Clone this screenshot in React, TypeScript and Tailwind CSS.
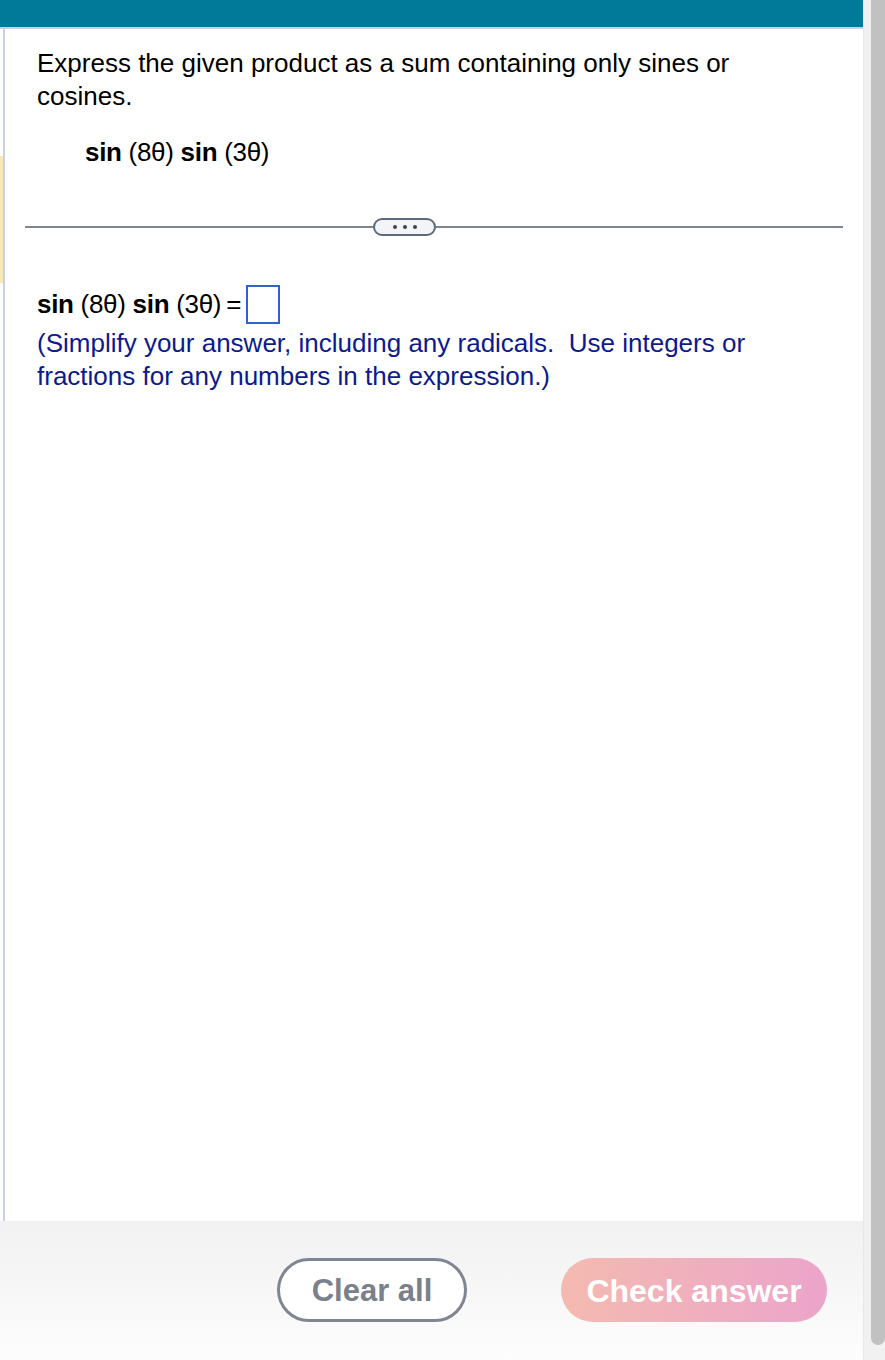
function Expr() {
  return (
    <span className="whitespace-nowrap tracking-[-0.3px]">
      <span className="font-bold">sin</span> (8θ) <span className="font-bold">sin</span> (3θ)
    </span>
  );
}

function App() {
  return (
    <main className="w-[885px] h-[1360px] flex bg-white font-['Liberation_Sans',Arial,sans-serif] text-black overflow-hidden">
      <div className="w-[863px] flex flex-col">
        <div className="h-[27px] bg-[#017a99] shrink-0" />
        <div className="h-[2px] bg-[#c9d1dd] shrink-0" />
        <div className="flex flex-1">
          {/* left edge strip */}
          <div className="w-[3px] flex flex-col">
            <div className="h-[127px]" />
            <div className="h-[127px] bg-[#f8e8b8]" />
          </div>
          <div className="w-[2px] bg-[#c9d0e0]" />
          <div className="flex-1 flex flex-col">
            <div className="pl-[32px] pr-[40px] pt-[18px] text-[26px] leading-[33px]">
              Express the given product as a sum containing only sines or cosines.
            </div>
            <div className="pl-[80px] mt-[23px] text-[26px] leading-[33px]">
              <Expr />
            </div>
            {/* divider */}
            <div className="flex items-center ml-[20px] mr-[20px] mt-[49px]">
              <div className="w-[348px] h-[2px] bg-[#7c8593]" />
              <div className="w-[63px] h-[18px] rounded-full border-2 border-[#5e6a79] bg-[#f3f4f6] flex items-center justify-center gap-[6px]">
                <span className="w-[4px] h-[4px] rounded-full bg-[#3d4550]" />
                <span className="w-[4px] h-[4px] rounded-full bg-[#3d4550]" />
                <span className="w-[4px] h-[4px] rounded-full bg-[#3d4550]" />
              </div>
              <div className="flex-1 h-[2px] bg-[#7c8593]" />
            </div>
            <div className="pl-[32px] mt-[49px] flex items-center text-[26px] leading-[33px]">
              <Expr />
              <span className="ml-[5px]">=</span>
              <span className="ml-[5px] w-[34px] h-[39px] border-2 border-[#2f63c9]" />
            </div>
            <div className="pl-[32px] pr-[80px] mt-[3px] text-[26px] leading-[33px] text-[#0c1a8c]">
              (Simplify your answer, including any radicals.&nbsp; Use integers or fractions for any numbers in the expression.)
            </div>
          </div>
        </div>
        {/* footer */}
        <div className="h-[139px] shrink-0 bg-gradient-to-b from-[#f1f1f1] to-[#fdfdfd] flex items-start pt-[37px]">
          <button className="ml-[277px] w-[190px] h-[64px] rounded-full border-[3px] border-[#7f8591] bg-white text-[#7a808c] font-bold text-[31px] pt-[2px]">
            Clear all
          </button>
          <button className="ml-[94px] w-[266px] h-[64px] rounded-full bg-gradient-to-r from-[#f4bab0] to-[#eca4ca] text-white font-bold text-[32px] pt-[2px]">
            Check answer
          </button>
        </div>
      </div>
      <div className="w-[1px] bg-[#e8e8e8]" />
      <div className="w-[7px] bg-[#f1f1f1]" />
      <div className="w-[14px] bg-[#f1f1f1] flex flex-col">
        <div className="h-[1345px] bg-[#c1c1c1] rounded-b-[7px]" />
      </div>
    </main>
  );
}

export default App;
